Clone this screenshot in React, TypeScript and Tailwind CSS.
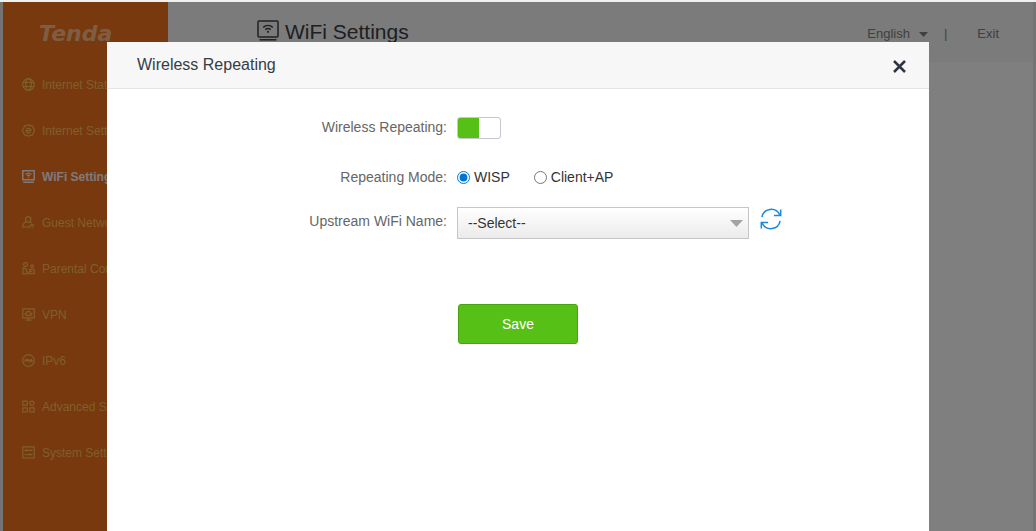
import { useState } from 'react';
import type { ReactNode } from 'react';

interface MenuItem {
  label: string;
  icon: ReactNode;
  active?: boolean;
}

function MenuIcon({ children }: { children: ReactNode }) {
  return (
    <svg className="w-[13px] h-[13px] shrink-0" viewBox="0 0 13 13" fill="none" stroke="currentColor" strokeWidth="1.2" aria-hidden="true">
      {children}
    </svg>
  );
}

const menuItems: MenuItem[] = [
  {
    label: 'Internet Status',
    icon: (
      <MenuIcon>
        <circle cx="6.5" cy="6.5" r="5.8" />
        <ellipse cx="6.5" cy="6.5" rx="2.8" ry="5.8" />
        <path d="M1.2 4.5h10.6M1.2 8.5h10.6" />
      </MenuIcon>
    ),
  },
  {
    label: 'Internet Settings',
    icon: (
      <MenuIcon>
        <path d="M6.5.7l1.8 1 2 .2.9 1.9 1.1 1.6v2.2l-1.1 1.6-.9 1.9-2 .2-1.8 1-1.8-1-2-.2-.9-1.9L.7 7.6V5.4l1.1-1.6.9-1.9 2-.2z" />
        <path d="M4.3 6.7h4.5c0-3.2-4.6-3.2-4.6 0 0 2.7 3 2.8 4.2 1.5" />
      </MenuIcon>
    ),
  },
  {
    label: 'WiFi Settings',
    active: true,
    icon: (
      <MenuIcon>
        <path strokeWidth="1.5" d="M.8.8h11.4v8.9H.8zM1.2 12.2h10.6" />
        <path d="M3.5 4.4c1.8-1.6 4.2-1.6 6 0M4.9 5.8c1-.8 2.2-.8 3.2 0" />
        <circle cx="6.5" cy="7.2" r=".8" fill="currentColor" stroke="none" />
      </MenuIcon>
    ),
  },
  {
    label: 'Guest Network',
    icon: (
      <MenuIcon>
        <circle cx="6.2" cy="3.4" r="2.7" />
        <path d="M4.4 5.8C2 6.6.8 8.4.8 11h7.4M8 6l1.6 1.2M7.8 10.9c.4-2.8 3.2-3 4.4-1.2M9.2 11h2.6" />
      </MenuIcon>
    ),
  },
  {
    label: 'Parental Control',
    icon: (
      <MenuIcon>
        <circle cx="3.5" cy="2.5" r="1.9" />
        <path d="M1 11.8V6.2h2.2l1.3 1.3V10H6v1.8z" />
        <circle cx="10" cy="4.1" r="1.3" />
        <path d="M7.8 7.3h4.4v4.4H7.8zM7.8 9.4h2.4" />
      </MenuIcon>
    ),
  },
  {
    label: 'VPN',
    icon: (
      <MenuIcon>
        <path d="M.8.8h11.4v9H.8zM6.5 9.8v2M3.5 12.2h6" />
        <path d="M4.2 7.3c-1.6-.2-1.4-2.3.2-2.2.3-2.4 3.7-2.4 4 0 1.7-.1 1.9 2 .2 2.2z" />
      </MenuIcon>
    ),
  },
  {
    label: 'IPv6',
    icon: (
      <MenuIcon>
        <circle cx="6.5" cy="6.5" r="5.8" />
        <path d="M3 5.3v2.4M4.5 7.7V5.4h1v1.1h-1M6.6 5.6l.6 1.9.6-1.9M10 5.3c-1.5.2-1.5 2.3-.4 2.3 1 0 .9-1.3-.6-1.1" />
      </MenuIcon>
    ),
  },
  {
    label: 'Advanced Settings',
    icon: (
      <MenuIcon>
        <path d="M.8 1.2h4.4v4H.8zM.8 7.8h4.4v4H.8zM7.8 7.8h4.4v4H7.8z" />
        <circle cx="10" cy="3.2" r="2.1" />
      </MenuIcon>
    ),
  },
  {
    label: 'System Settings',
    icon: (
      <MenuIcon>
        <path d="M.8.8h11.4v11.2H.8zM2.5 4.3h8M2.5 8.5h8" />
        <path strokeWidth="1.8" d="M4.3 3.2v2.2M8.3 7.4v2.2" />
      </MenuIcon>
    ),
  },
];

function Sidebar() {
  return (
    <aside className="w-[165px] shrink-0 bg-[#f0721e]">
      <div className="h-[59px] pl-9 pt-[18px] font-['DejaVu_Sans',sans-serif] text-[22px] leading-7 font-bold italic text-[#ffd2a4]/80">
        Tenda
      </div>
      <nav>
        {menuItems.map((item) => (
          <a
            key={item.label}
            href="#"
            className={`flex h-[46px] items-center gap-[7px] pl-[19px] pt-px text-xs whitespace-nowrap ${
              item.active ? 'font-bold text-[#fff2f6]' : 'text-[#ffbe55]'
            }`}
          >
            {item.icon}
            {item.label}
          </a>
        ))}
      </nav>
    </aside>
  );
}

function PageHeader() {
  return (
    <header className="flex h-[60px] items-center justify-between bg-[#f7f7f7] pl-[89px] pr-[34px]">
      <h1 className="flex items-start gap-1.5 text-[21px] leading-6 text-[#3a3f46]">
        <svg className="h-[22px] w-[22px]" viewBox="0 0 22 22" fill="none" stroke="currentColor" strokeWidth="1.5" aria-hidden="true">
          <rect x="1" y="1" width="20" height="16" rx="1" />
          <path d="M2.5 19.8h17" />
          <path d="M6.2 7.4c2.8-2.6 6.8-2.6 9.6 0M8.3 9.6c1.6-1.4 3.8-1.4 5.4 0" />
          <circle cx="11" cy="11.8" r="1.1" fill="currentColor" stroke="none" />
        </svg>
        WiFi Settings
      </h1>
      <div className="flex items-center pt-1 text-[13px] leading-5 text-[#808080]">
        <button type="button" className="flex items-center gap-[9px]">
          English
          <svg className="h-[5px] w-[9px]" viewBox="0 0 9 5" fill="currentColor" aria-hidden="true">
            <path d="M0 0h9L4.5 5z" />
          </svg>
        </button>
        <span className="ml-4">|</span>
        <a href="#" className="ml-[30px]">Exit</a>
      </div>
    </header>
  );
}

function RepeatingDialog() {
  const [enabled, setEnabled] = useState(true);
  const [mode, setMode] = useState('wisp');

  return (
    <div role="dialog" aria-modal="true" aria-labelledby="dialog-title" className="flex w-full max-w-[822px] flex-col bg-white">
      <div className="flex h-[47px] items-center justify-between border-b border-[#e4e4e4] bg-[#f7f7f7] pl-[30px] pr-[23px]">
        <h2 id="dialog-title" className="text-base leading-5 text-[#363c46]">Wireless Repeating</h2>
        <button type="button" aria-label="Close" className="pt-0.5 text-[#2d3542]">
          <svg className="h-[13px] w-[13px]" viewBox="0 0 13 13" fill="none" stroke="currentColor" strokeWidth="2.5" aria-hidden="true">
            <path d="M1 1l11 11M12 1L1 12" />
          </svg>
        </button>
      </div>

      <form className="pt-7 text-sm leading-5 text-[#333]" onSubmit={(e) => e.preventDefault()}>
        <div className="flex gap-2.5">
          <label htmlFor="repeating" className="w-[340px] shrink-0 text-right text-[#666]">Wireless Repeating:</label>
          <input
            id="repeating"
            type="checkbox"
            role="switch"
            checked={enabled}
            onChange={(e) => setEnabled(e.target.checked)}
            className="h-[22px] w-11 appearance-none rounded-[3px] border border-[#c4c8d0] bg-white checked:bg-[linear-gradient(to_right,#57c016_50%,#fff_50%)]"
          />
        </div>

        {/* Repeating mode */}
        <div className="mt-7 flex gap-2.5" role="radiogroup" aria-labelledby="mode-label">
          <span id="mode-label" className="w-[340px] shrink-0 text-right text-[#666]">Repeating Mode:</span>
          <div className="flex gap-6">
            <label className="flex items-center gap-1">
              <input type="radio" name="mode" className="h-[13px] w-[13px] accent-[#0075cf]" checked={mode === 'wisp'} onChange={() => setMode('wisp')} />
              WISP
            </label>
            <label className="flex items-center gap-1">
              <input type="radio" name="mode" className="h-[13px] w-[13px] accent-[#0075cf]" checked={mode === 'client-ap'} onChange={() => setMode('client-ap')} />
              Client+AP
            </label>
          </div>
        </div>

        {/* Upstream network */}
        <div className="mt-5 flex items-start">
          <label htmlFor="upstream" className="mr-2.5 w-[340px] shrink-0 pt-1 text-right text-[#666]">Upstream WiFi Name:</label>
          <div className="relative w-[292px]">
            <select id="upstream" className="h-8 w-full appearance-none border border-[#c6c6c6] bg-linear-to-b from-white to-[#ebebeb] px-2.5 text-[#333]">
              <option>--Select--</option>
            </select>
            <svg className="pointer-events-none absolute right-1.5 top-[13px] h-[7px] w-[13px] text-[#a3a3a3]" viewBox="0 0 13 7" fill="currentColor" aria-hidden="true">
              <path d="M0 0h13L6.5 7z" />
            </svg>
          </div>
          <button type="button" aria-label="Refresh" className="ml-[11px] pt-px text-[#1a88dc]">
            <svg className="h-[22px] w-[22px]" viewBox="0 0 22 22" fill="none" stroke="currentColor" strokeWidth="1.5" aria-hidden="true">
              <path d="M1.9 9.2C3.6.3 15.3-1.8 20 7M20.7 1.4v6.2h-6.8" />
              <path d="M20.1 12.8c-1.7 8.9-13.4 11-18.1 2.2M1.3 20.6v-6.2h6.8" />
            </svg>
          </button>
        </div>

        <button type="submit" className="ml-[351px] mt-[65px] h-10 w-[120px] rounded-[3px] border border-[#48a311] bg-[#57c016] text-white">
          Save
        </button>
      </form>
    </div>
  );
}

export default function App() {
  return (
    <div className="flex min-h-screen flex-col border-t-2 border-[#eef0f2] font-['Liberation_Sans',Arial,sans-serif]">
      <div className="flex grow border-x-[3px] border-[#e9e9e9] bg-white">
        <Sidebar />
        <main className="grow">
          <PageHeader />
        </main>
      </div>

      {/* Modal */}
      <div className="fixed inset-x-0 bottom-0 top-0.5 flex justify-center bg-black/50 pt-10">
        <RepeatingDialog />
      </div>
    </div>
  );
}
